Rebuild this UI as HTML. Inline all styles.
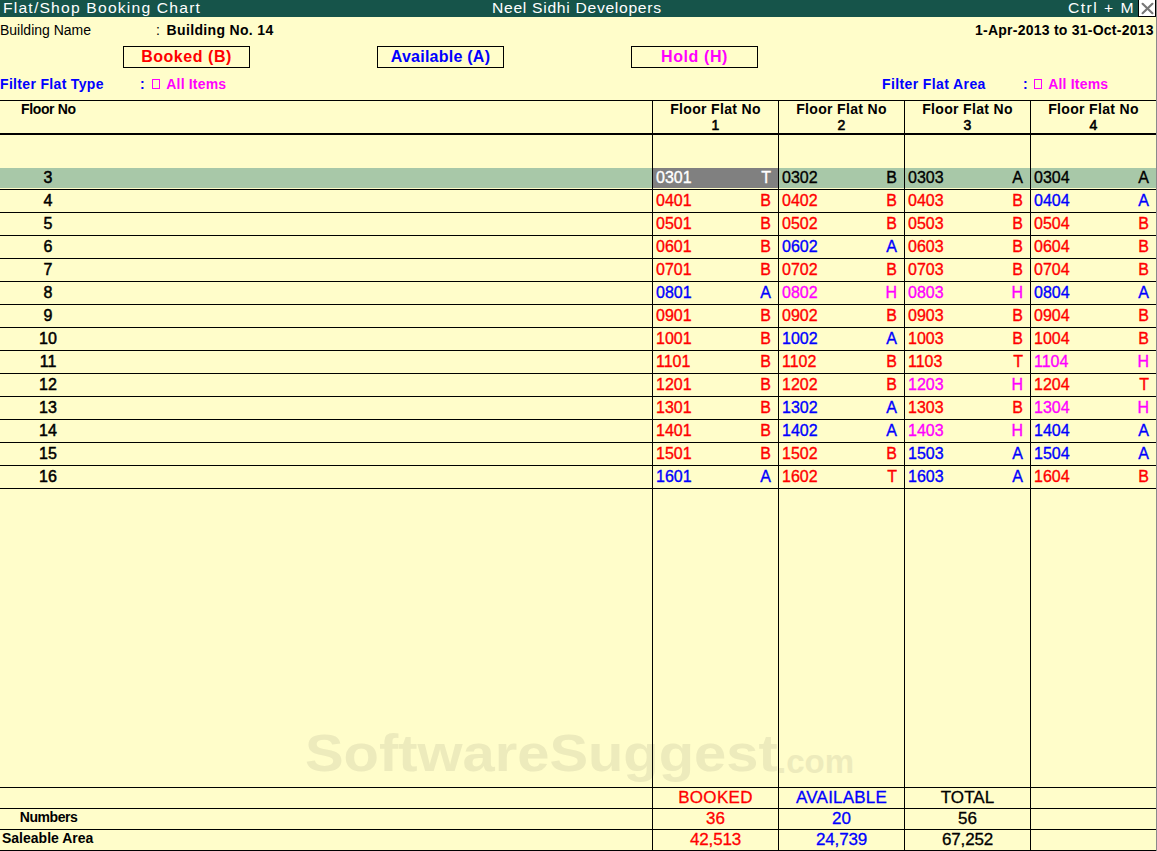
<!DOCTYPE html>
<html><head><meta charset="utf-8"><style>
html,body{margin:0;padding:0}
body{width:1157px;height:851px;position:relative;overflow:hidden;background:#FFFDCA;font-family:"Liberation Sans",sans-serif}
.t{position:absolute;white-space:pre}
.f14{font-size:14px;line-height:16px}
.f13{font-size:14px;line-height:16px}
.f13b{font-size:14px;line-height:16px;font-weight:bold}
.lg{position:absolute;top:46px;width:127px;height:22px;box-sizing:border-box;border:1px solid #000;text-align:center;font-weight:bold;font-size:16px;line-height:20px}
.hd{position:absolute;top:101px;width:125px;text-align:center;font-weight:bold;font-size:14px;line-height:16px;color:#000;letter-spacing:0.34px}
.fl{position:absolute;left:0;width:96px;text-align:center;font-size:16px;line-height:21px;color:#000;-webkit-text-stroke:0.5px #000}
.cl{position:absolute;width:125px;height:21px;font-size:16px;line-height:21px;-webkit-text-stroke:0.35px currentColor;display:flex;justify-content:space-between;box-sizing:border-box;padding:0 7px 0 3px}
.sm{position:absolute;width:125px;text-align:center;font-size:17px;line-height:21px;-webkit-text-stroke:0.3px currentColor}
.wm{position:absolute;font-weight:bold;font-size:52px;line-height:56px;color:#EDEBBC;transform-origin:0 0;transform:scaleX(1.113);white-space:pre}
.wm2{position:absolute;font-weight:bold;font-size:33px;line-height:40px;color:#EDEBBC;transform-origin:0 0;transform:scaleX(1.0);white-space:pre}
</style></head><body>
<div style="position:absolute;left:0px;top:0px;width:1157px;height:17px;background:#16544A"></div>
<div class="t f14" style="left:3px;top:0px;color:#fff;letter-spacing:1.06px;transform:scaleX(1.12);transform-origin:0 0">Flat/Shop Booking Chart</div>
<div class="t f14" style="left:491.5px;top:0px;color:#fff;letter-spacing:0.62px;transform:scaleX(1.12);transform-origin:0 0">Neel Sidhi Developers</div>
<div class="t f14" style="left:1068px;top:0px;color:#fff;letter-spacing:1.3px;transform:scaleX(1.12);transform-origin:0 0">Ctrl + M</div>
<div style="position:absolute;left:1138px;top:0px;width:18px;height:17px;background:#fff;border-left:1px solid #000;border-right:1px solid #000;border-bottom:1px solid #000;box-sizing:border-box"></div>
<svg style="position:absolute;left:1138px;top:0" width="18" height="17"><path d="M4.6 3.8 L14.4 13.2 M14.4 3.8 L4.6 13.2" stroke="#777" stroke-width="2.2" stroke-linecap="round"/></svg>
<div style="position:absolute;left:1156px;top:0px;width:1px;height:851px;background:#8a8a8a"></div>
<div class="t f13" style="left:0px;top:22px;color:#000;letter-spacing:0px">Building Name</div>
<div class="t f13" style="left:156px;top:22px;color:#000">:</div>
<div class="t f13b" style="left:166.6px;top:22px;color:#000;letter-spacing:0.34px">Building No. 14</div>
<div class="t f13b" style="left:975px;top:22px;color:#000;letter-spacing:0.24px">1-Apr-2013 to 31-Oct-2013</div>
<div class="lg" style="left:123px;color:#FF0000;letter-spacing:0.54px">Booked (B)</div>
<div class="lg" style="left:377px;color:#0000FF;letter-spacing:0.24px">Available (A)</div>
<div class="lg" style="left:631px;color:#FF00FF;letter-spacing:0.6px">Hold (H)</div>
<div class="t f13b" style="left:0px;top:76px;color:#0000FF;letter-spacing:0.33px">Filter Flat Type</div>
<div class="t f13b" style="left:140px;top:76px;color:#0000FF">:</div>
<div style="position:absolute;left:152px;top:79px;width:8px;height:10px;border:1px solid #FF00FF;box-sizing:border-box"></div>
<div class="t f13b" style="left:166.3px;top:76px;color:#FF00FF;letter-spacing:0.18px">All Items</div>
<div class="t f13b" style="left:882px;top:76px;color:#0000FF;letter-spacing:0.39px">Filter Flat Area</div>
<div class="t f13b" style="left:1023px;top:76px;color:#0000FF">:</div>
<div style="position:absolute;left:1034px;top:79px;width:8px;height:10px;border:1px solid #FF00FF;box-sizing:border-box"></div>
<div class="t f13b" style="left:1048.2px;top:76px;color:#FF00FF;letter-spacing:0.2px">All Items</div>
<div style="position:absolute;left:0px;top:168px;width:652px;height:20px;background:#A8C8A8"></div>
<div style="position:absolute;left:653px;top:168px;width:125px;height:20px;background:#808080"></div>
<div style="position:absolute;left:779px;top:168px;width:125px;height:20px;background:#A8C8A8"></div>
<div style="position:absolute;left:905px;top:168px;width:125px;height:20px;background:#A8C8A8"></div>
<div style="position:absolute;left:1031px;top:168px;width:125px;height:20px;background:#A8C8A8"></div>
<div class="wm" style="left:305px;top:725px">SoftwareSuggest</div>
<div class="wm2" style="left:777px;top:742px">.com</div>
<div class="t f13b" style="left:21px;top:101px;color:#000;letter-spacing:-0.36px">Floor No</div>
<div class="hd" style="left:653px">Floor Flat No<br><span style="font-weight:normal;-webkit-text-stroke:0.6px #000">1</span></div>
<div class="hd" style="left:779px">Floor Flat No<br><span style="font-weight:normal;-webkit-text-stroke:0.6px #000">2</span></div>
<div class="hd" style="left:905px">Floor Flat No<br><span style="font-weight:normal;-webkit-text-stroke:0.6px #000">3</span></div>
<div class="hd" style="left:1031px">Floor Flat No<br><span style="font-weight:normal;-webkit-text-stroke:0.6px #000">4</span></div>
<div class="fl" style="top:167px">3</div>
<div class="cl" style="left:653px;top:167px;color:#fff"><span>0301</span><span>T</span></div>
<div class="cl" style="left:779px;top:167px;color:#000"><span>0302</span><span>B</span></div>
<div class="cl" style="left:905px;top:167px;color:#000"><span>0303</span><span>A</span></div>
<div class="cl" style="left:1031px;top:167px;color:#000"><span>0304</span><span>A</span></div>
<div class="fl" style="top:190px">4</div>
<div class="cl" style="left:653px;top:190px;color:#FF0000"><span>0401</span><span>B</span></div>
<div class="cl" style="left:779px;top:190px;color:#FF0000"><span>0402</span><span>B</span></div>
<div class="cl" style="left:905px;top:190px;color:#FF0000"><span>0403</span><span>B</span></div>
<div class="cl" style="left:1031px;top:190px;color:#0000FF"><span>0404</span><span>A</span></div>
<div class="fl" style="top:213px">5</div>
<div class="cl" style="left:653px;top:213px;color:#FF0000"><span>0501</span><span>B</span></div>
<div class="cl" style="left:779px;top:213px;color:#FF0000"><span>0502</span><span>B</span></div>
<div class="cl" style="left:905px;top:213px;color:#FF0000"><span>0503</span><span>B</span></div>
<div class="cl" style="left:1031px;top:213px;color:#FF0000"><span>0504</span><span>B</span></div>
<div class="fl" style="top:236px">6</div>
<div class="cl" style="left:653px;top:236px;color:#FF0000"><span>0601</span><span>B</span></div>
<div class="cl" style="left:779px;top:236px;color:#0000FF"><span>0602</span><span>A</span></div>
<div class="cl" style="left:905px;top:236px;color:#FF0000"><span>0603</span><span>B</span></div>
<div class="cl" style="left:1031px;top:236px;color:#FF0000"><span>0604</span><span>B</span></div>
<div class="fl" style="top:259px">7</div>
<div class="cl" style="left:653px;top:259px;color:#FF0000"><span>0701</span><span>B</span></div>
<div class="cl" style="left:779px;top:259px;color:#FF0000"><span>0702</span><span>B</span></div>
<div class="cl" style="left:905px;top:259px;color:#FF0000"><span>0703</span><span>B</span></div>
<div class="cl" style="left:1031px;top:259px;color:#FF0000"><span>0704</span><span>B</span></div>
<div class="fl" style="top:282px">8</div>
<div class="cl" style="left:653px;top:282px;color:#0000FF"><span>0801</span><span>A</span></div>
<div class="cl" style="left:779px;top:282px;color:#FF00FF"><span>0802</span><span>H</span></div>
<div class="cl" style="left:905px;top:282px;color:#FF00FF"><span>0803</span><span>H</span></div>
<div class="cl" style="left:1031px;top:282px;color:#0000FF"><span>0804</span><span>A</span></div>
<div class="fl" style="top:305px">9</div>
<div class="cl" style="left:653px;top:305px;color:#FF0000"><span>0901</span><span>B</span></div>
<div class="cl" style="left:779px;top:305px;color:#FF0000"><span>0902</span><span>B</span></div>
<div class="cl" style="left:905px;top:305px;color:#FF0000"><span>0903</span><span>B</span></div>
<div class="cl" style="left:1031px;top:305px;color:#FF0000"><span>0904</span><span>B</span></div>
<div class="fl" style="top:328px">10</div>
<div class="cl" style="left:653px;top:328px;color:#FF0000"><span>1001</span><span>B</span></div>
<div class="cl" style="left:779px;top:328px;color:#0000FF"><span>1002</span><span>A</span></div>
<div class="cl" style="left:905px;top:328px;color:#FF0000"><span>1003</span><span>B</span></div>
<div class="cl" style="left:1031px;top:328px;color:#FF0000"><span>1004</span><span>B</span></div>
<div class="fl" style="top:351px">11</div>
<div class="cl" style="left:653px;top:351px;color:#FF0000"><span>1101</span><span>B</span></div>
<div class="cl" style="left:779px;top:351px;color:#FF0000"><span>1102</span><span>B</span></div>
<div class="cl" style="left:905px;top:351px;color:#FF0000"><span>1103</span><span>T</span></div>
<div class="cl" style="left:1031px;top:351px;color:#FF00FF"><span>1104</span><span>H</span></div>
<div class="fl" style="top:374px">12</div>
<div class="cl" style="left:653px;top:374px;color:#FF0000"><span>1201</span><span>B</span></div>
<div class="cl" style="left:779px;top:374px;color:#FF0000"><span>1202</span><span>B</span></div>
<div class="cl" style="left:905px;top:374px;color:#FF00FF"><span>1203</span><span>H</span></div>
<div class="cl" style="left:1031px;top:374px;color:#FF0000"><span>1204</span><span>T</span></div>
<div class="fl" style="top:397px">13</div>
<div class="cl" style="left:653px;top:397px;color:#FF0000"><span>1301</span><span>B</span></div>
<div class="cl" style="left:779px;top:397px;color:#0000FF"><span>1302</span><span>A</span></div>
<div class="cl" style="left:905px;top:397px;color:#FF0000"><span>1303</span><span>B</span></div>
<div class="cl" style="left:1031px;top:397px;color:#FF00FF"><span>1304</span><span>H</span></div>
<div class="fl" style="top:420px">14</div>
<div class="cl" style="left:653px;top:420px;color:#FF0000"><span>1401</span><span>B</span></div>
<div class="cl" style="left:779px;top:420px;color:#0000FF"><span>1402</span><span>A</span></div>
<div class="cl" style="left:905px;top:420px;color:#FF00FF"><span>1403</span><span>H</span></div>
<div class="cl" style="left:1031px;top:420px;color:#0000FF"><span>1404</span><span>A</span></div>
<div class="fl" style="top:443px">15</div>
<div class="cl" style="left:653px;top:443px;color:#FF0000"><span>1501</span><span>B</span></div>
<div class="cl" style="left:779px;top:443px;color:#FF0000"><span>1502</span><span>B</span></div>
<div class="cl" style="left:905px;top:443px;color:#0000FF"><span>1503</span><span>A</span></div>
<div class="cl" style="left:1031px;top:443px;color:#0000FF"><span>1504</span><span>A</span></div>
<div class="fl" style="top:466px">16</div>
<div class="cl" style="left:653px;top:466px;color:#0000FF"><span>1601</span><span>A</span></div>
<div class="cl" style="left:779px;top:466px;color:#FF0000"><span>1602</span><span>T</span></div>
<div class="cl" style="left:905px;top:466px;color:#0000FF"><span>1603</span><span>A</span></div>
<div class="cl" style="left:1031px;top:466px;color:#FF0000"><span>1604</span><span>B</span></div>
<div style="position:absolute;left:0px;top:100px;width:1156px;height:1px;background:#000"></div>
<div style="position:absolute;left:0px;top:133px;width:1156px;height:2px;background:#000"></div>
<div style="position:absolute;left:0px;top:189px;width:1156px;height:1px;background:#000"></div>
<div style="position:absolute;left:0px;top:212px;width:1156px;height:1px;background:#000"></div>
<div style="position:absolute;left:0px;top:235px;width:1156px;height:1px;background:#000"></div>
<div style="position:absolute;left:0px;top:258px;width:1156px;height:1px;background:#000"></div>
<div style="position:absolute;left:0px;top:281px;width:1156px;height:1px;background:#000"></div>
<div style="position:absolute;left:0px;top:304px;width:1156px;height:1px;background:#000"></div>
<div style="position:absolute;left:0px;top:327px;width:1156px;height:1px;background:#000"></div>
<div style="position:absolute;left:0px;top:350px;width:1156px;height:1px;background:#000"></div>
<div style="position:absolute;left:0px;top:373px;width:1156px;height:1px;background:#000"></div>
<div style="position:absolute;left:0px;top:396px;width:1156px;height:1px;background:#000"></div>
<div style="position:absolute;left:0px;top:419px;width:1156px;height:1px;background:#000"></div>
<div style="position:absolute;left:0px;top:442px;width:1156px;height:1px;background:#000"></div>
<div style="position:absolute;left:0px;top:465px;width:1156px;height:1px;background:#000"></div>
<div style="position:absolute;left:0px;top:488px;width:1156px;height:1px;background:#000"></div>
<div style="position:absolute;left:0px;top:787px;width:1156px;height:1px;background:#000"></div>
<div style="position:absolute;left:0px;top:808px;width:1156px;height:1px;background:#000"></div>
<div style="position:absolute;left:0px;top:829px;width:1156px;height:1px;background:#000"></div>
<div style="position:absolute;left:0px;top:850px;width:1156px;height:1px;background:#000"></div>
<div style="position:absolute;left:652px;top:100px;width:1px;height:751px;background:#000"></div>
<div style="position:absolute;left:778px;top:100px;width:1px;height:751px;background:#000"></div>
<div style="position:absolute;left:904px;top:100px;width:1px;height:751px;background:#000"></div>
<div style="position:absolute;left:1030px;top:100px;width:1px;height:751px;background:#000"></div>
<div class="sm" style="left:653px;top:787px;color:#FF0000;letter-spacing:0.32px">BOOKED</div>
<div class="sm" style="left:779px;top:787px;color:#0000FF;letter-spacing:0.19px">AVAILABLE</div>
<div class="sm" style="left:905px;top:787px;color:#000;letter-spacing:0.1px">TOTAL</div>
<div class="sm" style="left:653px;top:808px;color:#FF0000">36</div>
<div class="sm" style="left:779px;top:808px;color:#0000FF">20</div>
<div class="sm" style="left:905px;top:808px;color:#000">56</div>
<div class="sm" style="left:653px;top:829px;color:#FF0000;letter-spacing:-0.2px">42,513</div>
<div class="sm" style="left:779px;top:829px;color:#0000FF;letter-spacing:-0.2px">24,739</div>
<div class="sm" style="left:905px;top:829px;color:#000;letter-spacing:-0.2px">67,252</div>
<div class="t f13b" style="left:19.8px;top:809px;color:#000;letter-spacing:-0.45px">Numbers</div>
<div class="t f13b" style="left:2px;top:830px;color:#000;letter-spacing:0px">Saleable Area</div>
</body></html>
